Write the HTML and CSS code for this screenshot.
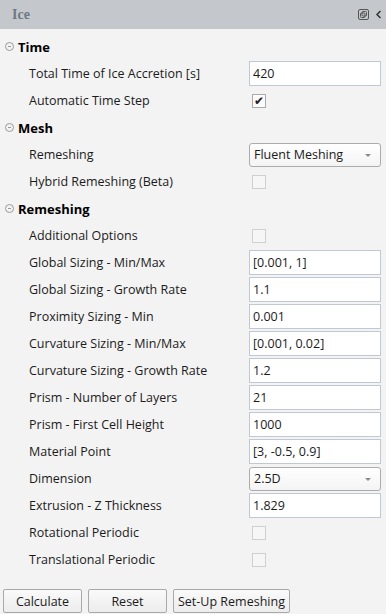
FILE: index.html
```html
<!DOCTYPE html>
<html>
<head>
<meta charset="utf-8">
<link rel="stylesheet" href="styles.css">
</head>
<body>
<div class="panel">
  <div class="header">
    <span class="title">Ice</span>
    <span class="tools">
      <svg class="ico" width="11" height="11" viewBox="0 0 11 11"><rect x="0.5" y="0.5" width="10" height="10" rx="1.5" fill="none" stroke="#555" stroke-width="1"/><rect x="4" y="2.5" width="4.5" height="4.5" rx="1" fill="none" stroke="#555" stroke-width="1"/><rect x="2.5" y="4" width="4.5" height="4.5" rx="1" fill="none" stroke="#555" stroke-width="1"/></svg>
      <svg class="ico" width="7" height="11" viewBox="0 0 7 11"><path d="M5.5 2 L2 5.5 L5.5 9" fill="none" stroke="#333" stroke-width="1.5"/></svg>
    </span>
  </div>
  <div class="body">
    <div class="section"><span class="toggle"></span>Time</div>
    <div class="row"><span class="label">Total Time of Ice Accretion [s]</span><span class="input">420</span></div>
    <div class="row"><span class="label">Automatic Time Step</span><span class="check on">&#10004;</span></div>

    <div class="section"><span class="toggle"></span>Mesh</div>
    <div class="row"><span class="label">Remeshing</span><span class="select">Fluent Meshing<span class="arrow"></span></span></div>
    <div class="row"><span class="label">Hybrid Remeshing (Beta)</span><span class="check"></span></div>

    <div class="section"><span class="toggle"></span>Remeshing</div>
    <div class="row"><span class="label">Additional Options</span><span class="check"></span></div>
    <div class="row"><span class="label">Global Sizing - Min/Max</span><span class="input">[0.001, 1]</span></div>
    <div class="row"><span class="label">Global Sizing - Growth Rate</span><span class="input">1.1</span></div>
    <div class="row"><span class="label">Proximity Sizing - Min</span><span class="input">0.001</span></div>
    <div class="row"><span class="label">Curvature Sizing - Min/Max</span><span class="input">[0.001, 0.02]</span></div>
    <div class="row"><span class="label">Curvature Sizing - Growth Rate</span><span class="input">1.2</span></div>
    <div class="row"><span class="label">Prism - Number of Layers</span><span class="input">21</span></div>
    <div class="row"><span class="label">Prism - First Cell Height</span><span class="input">1000</span></div>
    <div class="row"><span class="label">Material Point</span><span class="input">[3, -0.5, 0.9]</span></div>
    <div class="row"><span class="label">Dimension</span><span class="select">2.5D<span class="arrow"></span></span></div>
    <div class="row"><span class="label">Extrusion - Z Thickness</span><span class="input">1.829</span></div>
    <div class="row"><span class="label">Rotational Periodic</span><span class="check"></span></div>
    <div class="row"><span class="label">Translational Periodic</span><span class="check"></span></div>
  </div>
  <div class="footer">
    <span class="btn w79">Calculate</span>
    <span class="btn w79">Reset</span>
    <span class="btn">Set-Up Remeshing</span>
  </div>
</div>
</body>
</html>
```
FILE: styles.css
```css
html, body {
  margin: 0;
  padding: 0;
  background: #f3f3f3;
}
.panel {
  width: 386px;
  height: 614px;
  background: #f3f3f3;
  font-family: "Open Sans", "Noto Sans", sans-serif;
  font-size: 12.5px;
  color: #1b1b1b;
}
.header {
  height: 29px;
  background: #c4c8cc;
  display: flex;
  align-items: center;
  justify-content: space-between;
  padding: 0 4px 0 12px;
}
.title {
  font-family: "Liberation Serif", serif;
  font-weight: bold;
  font-size: 14px;
  color: #6d7884;
}
.tools {
  display: flex;
  align-items: center;
  gap: 6px;
}
.body {
  padding-top: 4px;
}
.section {
  height: 27px;
  display: flex;
  align-items: center;
  font-weight: bold;
  font-size: 13px;
  color: #000;
  padding-left: 5px;
}
.toggle {
  width: 7px;
  height: 7px;
  border: 1px solid #9a9a9a;
  border-radius: 50%;
  margin-right: 4px;
  position: relative;
  box-sizing: content-box;
}
.toggle::after {
  content: "";
  position: absolute;
  left: 2px;
  top: 3px;
  width: 3px;
  height: 1px;
  background: #9a9a9a;
}
.row {
  height: 27px;
  display: grid;
  grid-template-columns: 220px 132px;
  align-items: center;
  padding-left: 29px;
}
.label {
  white-space: nowrap;
}
.input {
  height: 25px;
  box-sizing: border-box;
  border: 1px solid #c0c8d4;
  background: #fff;
  display: flex;
  align-items: center;
  padding-left: 3px;
}
.select {
  height: 24px;
  box-sizing: border-box;
  border: 1px solid #acacac;
  border-radius: 3px;
  background: linear-gradient(#ffffff, #f4f4f4);
  display: flex;
  align-items: center;
  padding-left: 4px;
  position: relative;
}
.arrow {
  position: absolute;
  right: 9px;
  top: 10px;
  width: 0;
  height: 0;
  border-left: 3.5px solid transparent;
  border-right: 3.5px solid transparent;
  border-top: 3.5px solid #8a8a8a;
}
.check {
  width: 14px;
  height: 14px;
  box-sizing: border-box;
  border: 1px solid #cfcfcf;
  background: #f6f6f6;
  margin-left: 3px;
  font-family: "DejaVu Sans", sans-serif;
  font-size: 12px;
  line-height: 12px;
  text-align: center;
  color: #1a1a1a;
}
.check.on {
  border-color: #ababab;
  background: #fbfbfb;
}
.footer {
  display: flex;
  gap: 6px;
  padding: 16px 0 0 3px;
}
.btn {
  height: 24px;
  box-sizing: border-box;
  border: 1px solid #a9a9a9;
  border-radius: 2px;
  background: linear-gradient(#fafafa, #ececec);
  display: flex;
  align-items: center;
  justify-content: center;
  padding: 0 4px;
  font-size: 12.5px;
}
.btn.w79 {
  width: 79px;
}
```
